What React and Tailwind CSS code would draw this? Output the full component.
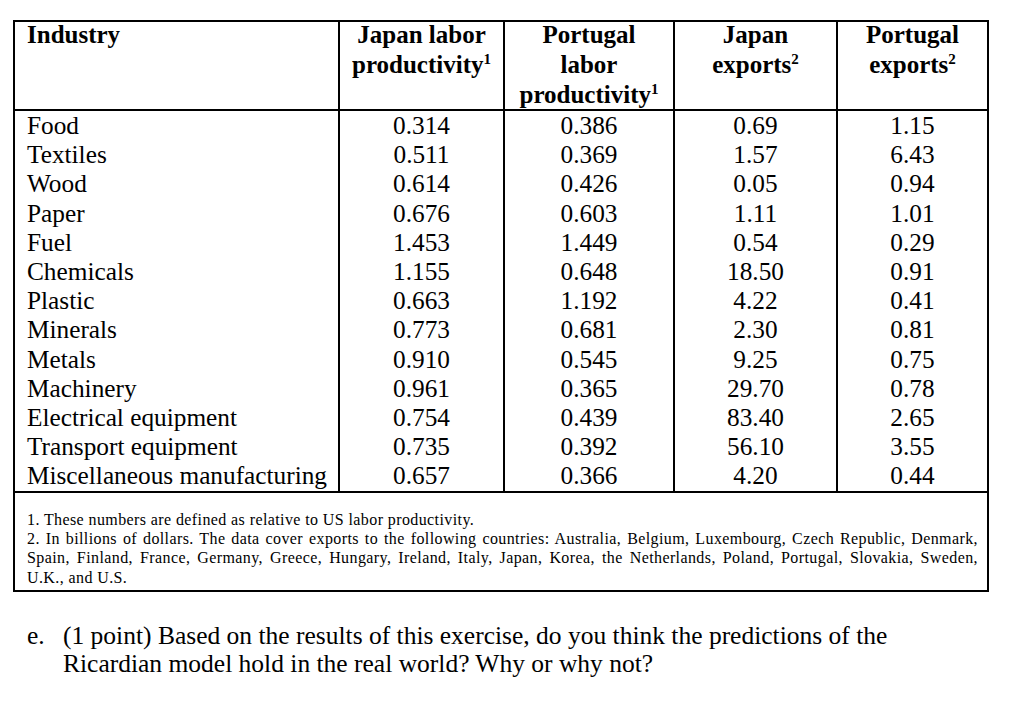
import React from 'react';

const rows = [
  ['Food', '0.314', '0.386', '0.69', '1.15'],
  ['Textiles', '0.511', '0.369', '1.57', '6.43'],
  ['Wood', '0.614', '0.426', '0.05', '0.94'],
  ['Paper', '0.676', '0.603', '1.11', '1.01'],
  ['Fuel', '1.453', '1.449', '0.54', '0.29'],
  ['Chemicals', '1.155', '0.648', '18.50', '0.91'],
  ['Plastic', '0.663', '1.192', '4.22', '0.41'],
  ['Minerals', '0.773', '0.681', '2.30', '0.81'],
  ['Metals', '0.910', '0.545', '9.25', '0.75'],
  ['Machinery', '0.961', '0.365', '29.70', '0.78'],
  ['Electrical equipment', '0.754', '0.439', '83.40', '2.65'],
  ['Transport equipment', '0.735', '0.392', '56.10', '3.55'],
  ['Miscellaneous manufacturing', '0.657', '0.366', '4.20', '0.44'],
];

const cols = 'grid grid-cols-[325px_165px_170px_163px_1fr]';

const Sup = ({ children }) => (
  <sup className="text-[15px] top-[-0.6em]">{children}</sup>
);

const App = () => {
  return (
    <div className="w-[1024px] h-[712px] bg-white text-black font-['Liberation_Serif',serif] pt-[20px] pl-[13px]">
      {/* Table */}
      <div className="w-[976px] border-2 border-black">
        {/* Header */}
        <div className={`${cols} h-[89px] border-b-2 border-black font-bold text-[25px] leading-[30px]`}>
          <div className="border-r-2 border-black pl-[12px] -mt-[2px]">Industry</div>
          <div className="border-r-2 border-black text-center -mt-[2px]">
            Japan labor<br />productivity<Sup>1</Sup>
          </div>
          <div className="border-r-2 border-black text-center -mt-[2px]">
            Portugal<br />labor<br />productivity<Sup>1</Sup>
          </div>
          <div className="border-r-2 border-black text-center -mt-[2px]">
            Japan<br />exports<Sup>2</Sup>
          </div>
          <div className="text-center -mt-[2px]">
            Portugal<br />exports<Sup>2</Sup>
          </div>
        </div>

        {/* Body */}
        <div className={`${cols} border-b-2 border-black text-[25.3px] leading-[29.2px]`}>
          <div className="border-r-2 border-black pl-[12px]">
            {rows.map((r) => <div key={r[0]}>{r[0]}</div>)}
          </div>
          {[1, 2, 3, 4].map((c) => (
            <div key={c} className={c < 4 ? 'border-r-2 border-black text-center' : 'text-center'}>
              {rows.map((r) => <div key={r[0]}>{r[c]}</div>)}
            </div>
          ))}
        </div>

        {/* Footnotes */}
        <div className="pl-[12px] pr-[9px] pt-[17px] pb-[3px] text-[16px] leading-[19.3px] tracking-[0.4px] text-justify">
          <p>1. These numbers are defined as relative to US labor productivity.</p>
          <p>
            2. In billions of dollars. The data cover exports to the following countries: Australia, Belgium, Luxembourg,
            Czech Republic, Denmark, Spain, Finland, France, Germany, Greece, Hungary, Ireland, Italy, Japan, Korea, the
            Netherlands, Poland, Portugal, Slovakia, Sweden, U.K., and U.S.
          </p>
        </div>
      </div>

      {/* Question */}
      <div className="mt-[30px] pl-[14px] flex text-[25.5px] leading-[28px]">
        <span className="w-[36px] shrink-0">e.</span>
        <p>
          (1 point) Based on the results of this exercise, do you think the predictions of the
          <br />
          Ricardian model hold in the real world? Why or why not?
        </p>
      </div>
    </div>
  );
};

export default App;
